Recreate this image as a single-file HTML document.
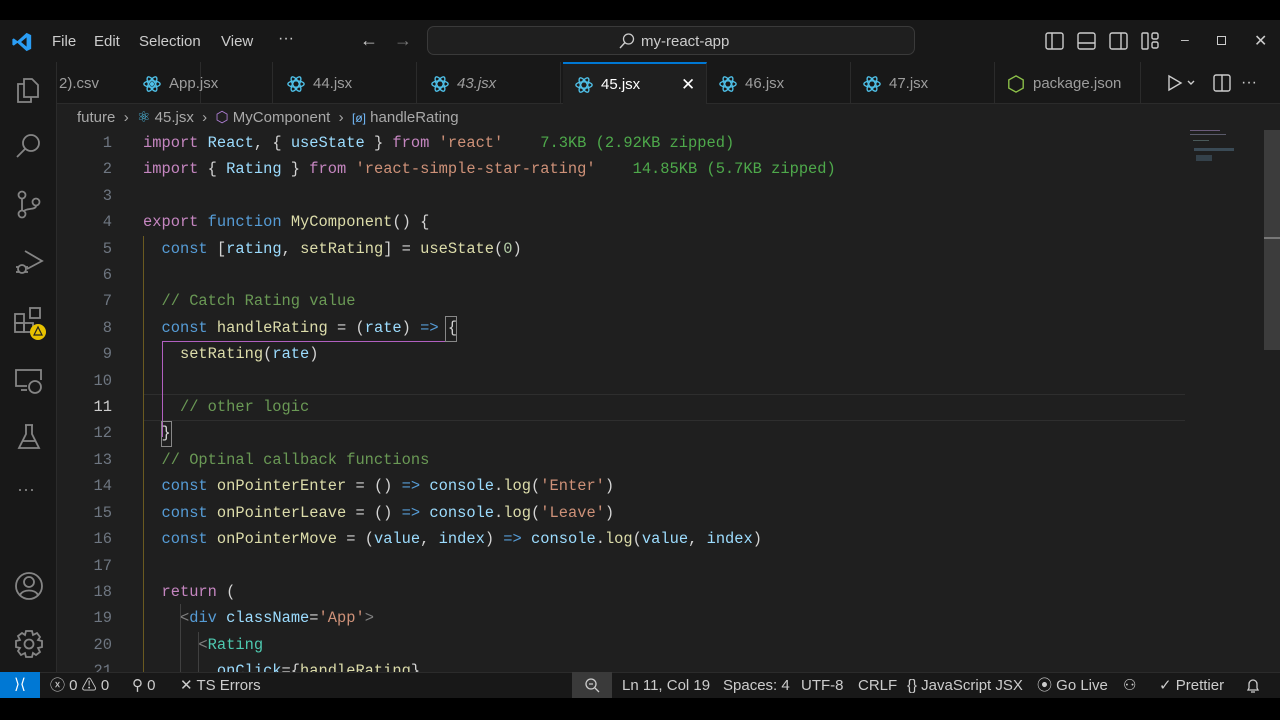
<!DOCTYPE html>
<html><head><meta charset="utf-8"><style>
*{margin:0;padding:0;box-sizing:border-box}
body{width:1280px;height:720px;background:#000;position:relative;overflow:hidden;font-family:"Liberation Sans",sans-serif;color:#ccc}
.abs{position:absolute}
#title{left:0;top:20px;width:1280px;height:42px;background:#181818}
#tabs{left:57px;top:62px;width:1223px;height:42px;background:#181818;border-bottom:1px solid #2b2b2b}
.tab{position:absolute;top:0;height:42px;width:144px;border-right:1px solid #2b2b2b;font-size:15px;color:#9d9d9d;line-height:44px;padding-left:30px}
.tab svg{position:absolute;left:9px;top:13px}
#act{background:#1f1f1f;color:#fff;border-top:2px solid #0078d4;line-height:41px}
#side{left:0;top:62px;width:57px;height:610px;background:#181818;border-right:1px solid #2b2b2b}
#editor{left:57px;top:104px;width:1223px;height:568px;background:#1f1f1f}
.code{position:absolute;left:0;font-family:"Liberation Mono",monospace;font-size:15.4px;line-height:26.4px;white-space:pre;color:#d4d4d4}
.ln{position:absolute;width:55px;text-align:right;font-family:"Liberation Mono",monospace;font-size:15.4px;line-height:26.4px;color:#6e7681}
.k{color:#c586c0}.b{color:#569cd6}.v{color:#9cdcfe}.f{color:#dcdcaa}.s{color:#ce9178}.c{color:#6a9955}.h{color:#4ea94b}.t{color:#4ec9b0}.g{color:#808080}
#status{left:0;top:672px;width:1280px;height:26px;background:#181818;border-top:1px solid #2b2b2b;font-size:15px;color:#ccc;line-height:26px}
#status span{position:absolute;top:0}
</style></head><body>
<div class="abs" id="title">
 <svg class="abs" style="left:11px;top:11px" width="22" height="22" viewBox="0 0 24 24"><path d="M17 2 L22 4.5 V19.5 L17 22 L7 13 L3 16 L1.5 15 V9 L3 8 L7 11 Z M17 7 L11 12 L17 17 Z" fill="#2a9df4"/></svg>
 <div class="abs" style="left:52px;top:13px;font-size:15px;color:#ccc">File</div>
 <div class="abs" style="left:94px;top:13px;font-size:15px;color:#ccc">Edit</div>
 <div class="abs" style="left:139px;top:13px;font-size:15px;color:#ccc">Selection</div>
 <div class="abs" style="left:221px;top:13px;font-size:15px;color:#ccc">View</div>
 <div class="abs" style="left:278px;top:10px;font-size:16px;color:#ccc">···</div>
 <div class="abs" style="left:360px;top:10px;font-size:18px;color:#ccc">←</div>
 <div class="abs" style="left:394px;top:10px;font-size:18px;color:#777">→</div>
 <div class="abs" style="left:427px;top:6px;width:488px;height:29px;border:1px solid #3a3a3a;border-radius:7px;background:#1f1f1f"></div>
 <svg class="abs" style="left:618px;top:12px" width="18" height="18" viewBox="0 0 18 18"><circle cx="10.5" cy="7" r="5" fill="none" stroke="#ccc" stroke-width="1.3"/><path d="M7 10.5 L2 16" stroke="#ccc" stroke-width="1.4"/></svg>
 <div class="abs" style="left:641px;top:13px;font-size:15px;color:#ccc">my-react-app</div>
 <svg class="abs" style="left:1045px;top:11px" width="130" height="20" viewBox="0 0 130 20" fill="none" stroke="#ccc" stroke-width="1.4"><rect x="1" y="2" width="17" height="16" rx="2"/><path d="M7 2V18"/><rect x="33" y="2" width="17" height="16" rx="2"/><path d="M33 12H50"/><rect x="65" y="2" width="17" height="16" rx="2"/><path d="M76 2V18"/><rect x="97" y="2" width="6" height="16" rx="1"/><rect x="107" y="2" width="6" height="6" rx="1.5"/><rect x="107" y="11" width="6" height="6" rx="1.5"/></svg>
 <div class="abs" style="left:1181px;top:11px;font-size:14px;color:#ccc">–</div>
 <div class="abs" style="left:1217px;top:16px;width:9px;height:9px;border:1px solid #ccc"></div>
 <div class="abs" style="left:1254px;top:11px;font-size:16px;color:#ccc">✕</div>
</div>
<div class="abs" id="side">
 <svg class="abs" style="left:14px;top:12px" width="30" height="30" viewBox="0 0 30 30" fill="none" stroke="#858585" stroke-width="1.8"><path d="M10 5H18L24 11V23H10Z"/><path d="M10 10H4V28H17V23"/></svg>
 <svg class="abs" style="left:14px;top:69px" width="30" height="30" viewBox="0 0 30 30" fill="none" stroke="#858585" stroke-width="1.8"><circle cx="17" cy="12" r="8"/><path d="M11 18L3 26"/></svg>
 <svg class="abs" style="left:14px;top:127px" width="30" height="30" viewBox="0 0 30 30" fill="none" stroke="#858585" stroke-width="1.8"><circle cx="8" cy="6" r="3.5"/><circle cx="8" cy="25" r="3.5"/><circle cx="22" cy="13" r="3.5"/><path d="M8 10V21M22 17C22 21 12 19 10 22"/></svg>
 <svg class="abs" style="left:14px;top:185px" width="30" height="30" viewBox="0 0 30 30" fill="none" stroke="#858585" stroke-width="1.8"><path d="M11 4L28 14L13 22"/><circle cx="8" cy="22" r="4"/><path d="M2 20H5M2 25H5M11 20H14M11 25H14"/></svg>
 <svg class="abs" style="left:13px;top:244px" width="34" height="34" viewBox="0 0 34 34" fill="none" stroke="#858585" stroke-width="1.8"><rect x="2" y="8" width="9" height="9"/><rect x="2" y="17" width="9" height="9"/><rect x="11" y="17" width="9" height="9"/><rect x="17" y="2" width="10" height="10"/><circle cx="25" cy="26" r="8" fill="#e8c200" stroke="none"/><path d="M25 21L21 29H29Z" stroke="#222" stroke-width="1.2"/></svg>
 <svg class="abs" style="left:13px;top:304px" width="32" height="30" viewBox="0 0 32 30" fill="none" stroke="#858585" stroke-width="1.8"><path d="M14 20H3V4H28V14"/><path d="M8 24H14"/><circle cx="22" cy="21" r="6"/></svg>
 <svg class="abs" style="left:14px;top:360px" width="30" height="30" viewBox="0 0 30 30" fill="none" stroke="#858585" stroke-width="1.8"><path d="M11 3H19M12 3V12L5 26H25L18 12V3M8 19H22"/></svg>
 <div class="abs" style="left:17px;top:417px;font-size:18px;color:#858585">···</div>
 <svg class="abs" style="left:13px;top:508px" width="32" height="32" viewBox="0 0 32 32" fill="none" stroke="#858585" stroke-width="1.8"><circle cx="16" cy="16" r="13"/><circle cx="16" cy="12" r="5"/><path d="M7 25C10 19 22 19 25 25"/></svg>
 <svg class="abs" style="left:13px;top:566px" width="32" height="32" viewBox="0 0 32 32" fill="none" stroke="#858585" stroke-width="1.8"><circle cx="16" cy="16" r="4.5"/><path d="M13 3H19L20 7L24 5L27 9L25 12L29 13V19L25 20L27 24L23 27L20 25L19 29H13L12 25L8 27L5 23L7 20L3 19V13L7 12L5 8L9 5L12 7Z"/></svg>
</div>
<div class="abs" id="tabs">
 <div class="tab" style="left:0;padding-left:2px">2).csv</div>
 <div class="tab" style="left:72px;padding-left:40px"><svg style="left:14px" width="18" height="18" viewBox="0 0 20 20" fill="none" stroke="#4fc1e9" stroke-width="1.5"><ellipse cx="10" cy="10" rx="9" ry="3.5"/><ellipse cx="10" cy="10" rx="9" ry="3.5" transform="rotate(60 10 10)"/><ellipse cx="10" cy="10" rx="9" ry="3.5" transform="rotate(120 10 10)"/><circle cx="10" cy="10" r="1.5" fill="#4fc1e9"/></svg>App.jsx</div>
 <div class="tab" style="left:216px;padding-left:40px"><svg style="left:14px" width="18" height="18" viewBox="0 0 20 20" fill="none" stroke="#4fc1e9" stroke-width="1.5"><ellipse cx="10" cy="10" rx="9" ry="3.5"/><ellipse cx="10" cy="10" rx="9" ry="3.5" transform="rotate(60 10 10)"/><ellipse cx="10" cy="10" rx="9" ry="3.5" transform="rotate(120 10 10)"/></svg>44.jsx</div>
 <div class="tab" style="left:360px;padding-left:40px;font-style:italic"><svg style="left:14px" width="18" height="18" viewBox="0 0 20 20" fill="none" stroke="#4fc1e9" stroke-width="1.5"><ellipse cx="10" cy="10" rx="9" ry="3.5"/><ellipse cx="10" cy="10" rx="9" ry="3.5" transform="rotate(60 10 10)"/><ellipse cx="10" cy="10" rx="9" ry="3.5" transform="rotate(120 10 10)"/></svg>43.jsx</div>
 <div class="tab" id="act" style="left:506px;padding-left:38px"><svg style="left:12px;top:12px" width="18" height="18" viewBox="0 0 20 20" fill="none" stroke="#4fc1e9" stroke-width="1.5"><ellipse cx="10" cy="10" rx="9" ry="3.5"/><ellipse cx="10" cy="10" rx="9" ry="3.5" transform="rotate(60 10 10)"/><ellipse cx="10" cy="10" rx="9" ry="3.5" transform="rotate(120 10 10)"/></svg>45.jsx<span style="position:absolute;left:118px;top:0;font-size:17px;color:#fff">✕</span></div>
 <div class="tab" style="left:650px;padding-left:38px"><svg style="left:12px" width="18" height="18" viewBox="0 0 20 20" fill="none" stroke="#4fc1e9" stroke-width="1.5"><ellipse cx="10" cy="10" rx="9" ry="3.5"/><ellipse cx="10" cy="10" rx="9" ry="3.5" transform="rotate(60 10 10)"/><ellipse cx="10" cy="10" rx="9" ry="3.5" transform="rotate(120 10 10)"/></svg>46.jsx</div>
 <div class="tab" style="left:794px;padding-left:38px"><svg style="left:12px" width="18" height="18" viewBox="0 0 20 20" fill="none" stroke="#4fc1e9" stroke-width="1.5"><ellipse cx="10" cy="10" rx="9" ry="3.5"/><ellipse cx="10" cy="10" rx="9" ry="3.5" transform="rotate(60 10 10)"/><ellipse cx="10" cy="10" rx="9" ry="3.5" transform="rotate(120 10 10)"/></svg>47.jsx</div>
 <div class="tab" style="left:938px;padding-left:38px;width:146px"><svg style="left:12px" width="18" height="18" viewBox="0 0 20 20" fill="none" stroke="#8dc149" stroke-width="1.5"><path d="M10 1L18 5.5V14.5L10 19L2 14.5V5.5Z"/></svg>package.json</div>
 <svg class="abs" style="left:1110px;top:12px" width="130" height="18" viewBox="0 0 130 18" fill="none" stroke="#ccc" stroke-width="1.4"><path d="M2 2L14 9L2 16Z"/><path d="M21 7L24 10L27 7"/><rect x="47" y="1" width="16" height="16" rx="2"/><path d="M55 1V17"/></svg>
 <div class="abs" style="left:1184px;top:12px;font-size:16px;color:#ccc">···</div>
</div>
<div class="abs" id="editor">
 <div class="abs" style="left:20px;top:4px;font-size:15px;color:#a9a9a9;white-space:nowrap">future &nbsp;›&nbsp; <span style="color:#4fc1e9">⚛</span> 45.jsx &nbsp;›&nbsp; <span style="color:#b180d7">⬡</span> MyComponent &nbsp;›&nbsp; <span style="color:#75beff;font-size:12px">[ø]</span> handleRating</div>
 <div class="abs" style="left:86px;top:290px;width:1042px;height:27px;border-top:1px solid #2e2e2e;border-bottom:1px solid #2e2e2e"></div>
 <div class="abs" style="left:86px;top:132px;width:1px;height:436px;background:#6a5a20"></div>
 <div class="abs" style="left:105px;top:237px;width:1px;height:96px;background:#b160c0"></div>
 <div class="abs" style="left:105px;top:237px;width:294px;height:1px;background:#b160c0"></div>
 <div class="abs" style="left:123px;top:500px;width:1px;height:68px;background:#404040"></div>
 <div class="abs" style="left:141px;top:528px;width:1px;height:40px;background:#404040"></div>
 <div class="abs" style="left:388px;top:212px;width:12px;height:26px;border:1px solid #888"></div>
 <div class="abs" style="left:104px;top:317px;width:11px;height:26px;border:1px solid #888"></div>
 <div class="ln" style="top:26px">1<br>2<br>3<br>4<br>5<br>6<br>7<br>8<br>9<br>10<br><span style="color:#ccc">11</span><br>12<br>13<br>14<br>15<br>16<br>17<br>18<br>19<br>20<br>21</div>
 <div class="code" style="left:86px;top:26px"><span class="k">import</span> <span class="v">React</span>, { <span class="v">useState</span> } <span class="k">from</span> <span class="s">'react'</span>    <span class="h">7.3KB (2.92KB zipped)</span>
<span class="k">import</span> { <span class="v">Rating</span> } <span class="k">from</span> <span class="s">'react-simple-star-rating'</span>    <span class="h">14.85KB (5.7KB zipped)</span>

<span class="k">export</span> <span class="b">function</span> <span class="f">MyComponent</span>() {
  <span class="b">const</span> [<span class="v">rating</span>, <span class="f">setRating</span>] = <span class="f">useState</span>(<span style="color:#b5cea8">0</span>)

  <span class="c">// Catch Rating value</span>
  <span class="b">const</span> <span class="f">handleRating</span> = (<span class="v">rate</span>) <span class="b">=&gt;</span> {
    <span class="f">setRating</span>(<span class="v">rate</span>)

    <span class="c">// other logic</span>
  }
  <span class="c">// Optinal callback functions</span>
  <span class="b">const</span> <span class="f">onPointerEnter</span> = () <span class="b">=&gt;</span> <span class="v">console</span>.<span class="f">log</span>(<span class="s">'Enter'</span>)
  <span class="b">const</span> <span class="f">onPointerLeave</span> = () <span class="b">=&gt;</span> <span class="v">console</span>.<span class="f">log</span>(<span class="s">'Leave'</span>)
  <span class="b">const</span> <span class="f">onPointerMove</span> = (<span class="v">value</span>, <span class="v">index</span>) <span class="b">=&gt;</span> <span class="v">console</span>.<span class="f">log</span>(<span class="v">value</span>, <span class="v">index</span>)

  <span class="k">return</span> (
    <span class="g">&lt;</span><span class="b">div</span> <span class="v">className</span>=<span class="s">'App'</span><span class="g">&gt;</span>
      <span class="g">&lt;</span><span class="t">Rating</span>
        <span class="v">onClick</span>={<span class="f">handleRating</span>}</div>
 <div class="abs" style="left:1133px;top:26px;width:30px;height:1px;background:#6a5a7a"></div>
 <div class="abs" style="left:1133px;top:30px;width:36px;height:1px;background:#5a5a6a"></div>
 <div class="abs" style="left:1136px;top:36px;width:16px;height:1px;background:#4a5a5a"></div>
 <div class="abs" style="left:1137px;top:44px;width:40px;height:3px;background:#3a4a55"></div>
 <div class="abs" style="left:1139px;top:51px;width:16px;height:6px;background:#34414a"></div>
 <div class="abs" style="left:1207px;top:26px;width:16px;height:220px;background:#3c3c3c"></div>
 <div class="abs" style="left:1207px;top:133px;width:16px;height:2px;background:#777"></div>
</div>
<div class="abs" id="status">
 <div class="abs" style="left:0;top:-1px;width:40px;height:26px;background:#0078d4;color:#fff;text-align:center;font-size:15px">⟩⟨</div>
 <span style="left:50px">ⓧ 0 ⚠ 0</span>
 <span style="left:132px">⚲ 0</span>
 <span style="left:180px">✕ TS Errors</span>
 <div class="abs" style="left:572px;top:-1px;width:40px;height:26px;background:#3a3a3a"></div>
 <svg class="abs" style="left:584px;top:4px" width="17" height="17" viewBox="0 0 17 17" fill="none" stroke="#ccc" stroke-width="1.3"><circle cx="7" cy="7" r="5"/><path d="M11 11L15 15M5 7H9"/></svg>
 <span style="left:622px">Ln 11, Col 19</span>
 <span style="left:723px">Spaces: 4</span>
 <span style="left:801px">UTF-8</span>
 <span style="left:858px">CRLF</span>
 <span style="left:907px">{} JavaScript JSX</span>
 <span style="left:1037px">⦿ Go Live</span>
 <span style="left:1123px">⚇</span>
 <span style="left:1159px">✓ Prettier</span>
 <svg class="abs" style="left:1246px;top:5px" width="14" height="16" viewBox="0 0 14 16" fill="none" stroke="#ccc" stroke-width="1.3"><path d="M2 12H12L11 10V6A4 4 0 0 0 3 6V10Z M5 14H9"/></svg>
</div>
</body></html>
